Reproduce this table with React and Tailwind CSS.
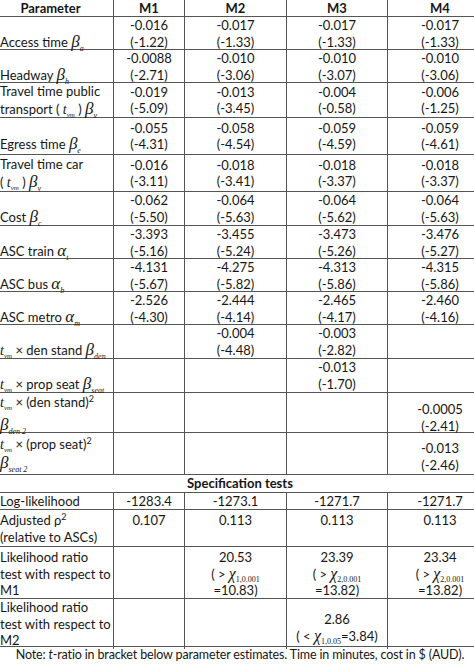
import React from 'react'

const cols = 'grid grid-cols-[126px_71px_102px_101px_104px]'

function Beta({ s }) {
  return (
    <span className="font-['Liberation_Serif'] italic text-[17px] leading-none">
      β<span className="relative top-[4px] text-[8px] leading-none">{s}</span>
    </span>
  )
}

function Alpha({ s }) {
  return (
    <span className="font-['Liberation_Serif'] italic text-[17px] leading-none">
      α<span className="relative top-[4px] text-[8px] leading-none">{s}</span>
    </span>
  )
}

function Tvm() {
  return (
    <span className="font-['Liberation_Serif'] italic text-[14px] leading-none">
      t<span className="relative top-[3px] text-[7px] leading-none">vm</span>
    </span>
  )
}

function Chi({ s }) {
  return (
    <span className="font-['Liberation_Serif'] text-[16px] leading-none">
      <span className="italic">χ</span>
      <span className="relative top-[3px] text-[8px] leading-none">{s}</span>
    </span>
  )
}

function Sq() {
  return <span className="relative top-[-5px] text-[9px] leading-none">2</span>
}

const rows = [
  { h: 'h-[33px]', label: <>Access time <Beta s="a" /></>, v: [['-0.016', '(-1.22)'], ['-0.017', '(-1.33)'], ['-0.017', '(-1.33)'], ['-0.017', '(-1.33)']] },
  { h: 'h-[33px]', label: <>Headway <Beta s="h" /></>, v: [['-0.0088', '(-2.71)'], ['-0.010', '(-3.06)'], ['-0.010', '(-3.07)'], ['-0.010', '(-3.06)']] },
  { h: 'h-[35px]', multi: true, label: <><div>Travel time public</div><div>transport ( <Tvm /> ) <Beta s="v" /></div></>, v: [['-0.019', '(-5.09)'], ['-0.013', '(-3.45)'], ['-0.004', '(-0.58)'], ['-0.006', '(-1.25)']] },
  { h: 'h-[37px]', label: <>Egress time <Beta s="e" /></>, v: [['-0.055', '(-4.31)'], ['-0.058', '(-4.54)'], ['-0.059', '(-4.59)'], ['-0.059', '(-4.61)']] },
  { h: 'h-[37px]', multi: true, label: <><div>Travel time car</div><div>( <Tvm /> ) <Beta s="v" /></div></>, v: [['-0.016', '(-3.11)'], ['-0.018', '(-3.41)'], ['-0.018', '(-3.37)'], ['-0.018', '(-3.37)']] },
  { h: 'h-[34px]', label: <>Cost <Beta s="c" /></>, v: [['-0.062', '(-5.50)'], ['-0.064', '(-5.63)'], ['-0.064', '(-5.62)'], ['-0.064', '(-5.63)']] },
  { h: 'h-[33px]', label: <>ASC train <Alpha s="t" /></>, v: [['-3.393', '(-5.16)'], ['-3.455', '(-5.24)'], ['-3.473', '(-5.26)'], ['-3.476', '(-5.27)']] },
  { h: 'h-[33px]', label: <>ASC bus <Alpha s="b" /></>, v: [['-4.131', '(-5.67)'], ['-4.275', '(-5.82)'], ['-4.313', '(-5.86)'], ['-4.315', '(-5.86)']] },
  { h: 'h-[33px]', label: <>ASC metro <Alpha s="m" /></>, v: [['-2.526', '(-4.30)'], ['-2.444', '(-4.14)'], ['-2.465', '(-4.17)'], ['-2.460', '(-4.16)']] },
  { h: 'h-[34px]', label: <><Tvm /> × den stand <Beta s="den" /></>, v: [null, ['-0.004', '(-4.48)'], ['-0.003', '(-2.82)'], null] },
  { h: 'h-[34px]', label: <><Tvm /> × prop seat <Beta s="seat" /></>, v: [null, null, ['-0.013', '(-1.70)'], null] },
  { h: 'h-[40px]', multi: true, vpad: 'pt-[8px]', label: <><div><Tvm /> × (den stand)<Sq /></div><div className="mt-[5px]"><Beta s="den 2" /></div></>, v: [null, null, null, ['-0.0005', '(-2.41)']] },
  { h: 'h-[42px]', multi: true, vpad: 'pt-[6px]', label: <><div><Tvm /> × (prop seat)<Sq /></div><div className="mt-[1px]"><Beta s="seat 2" /></div></>, v: [null, null, null, ['-0.013', '(-2.46)']] },
]

function Values({ v, vpad }) {
  return (
    <div className={`flex flex-col items-center justify-center border-r border-[#555] ${vpad || ''}`}>
      {v && (
        <>
          <div>{v[0]}</div>
          <div>{v[1]}</div>
        </>
      )}
    </div>
  )
}

export default function App() {
  return (
    <div className="w-[474px] h-[664px] overflow-hidden bg-white text-[#161616] font-['Lato','Noto_Sans',sans-serif] text-[13px] leading-[16.5px]">
      <div className="ml-[-12px] w-[504px]">
        <div className={`${cols} h-[17px] border-b border-[#555] font-bold`}>
          <div className="flex items-center justify-center border-r border-[#555]">Parameter</div>
          <div className="flex items-center justify-center border-r border-[#555]">M1</div>
          <div className="flex items-center justify-center border-r border-[#555]">M2</div>
          <div className="flex items-center justify-center border-r border-[#555]">M3</div>
          <div className="flex items-center justify-center">M4</div>
        </div>

        {rows.map((r, i) => (
          <div key={i} className={`${cols} ${r.h} border-b border-[#555]`}>
            {r.multi ? (
              <div className="flex flex-col justify-center pl-[12px] border-r border-[#555] whitespace-nowrap">{r.label}</div>
            ) : (
              <div className="flex items-center pl-[12px] pt-[16px] border-r border-[#555] whitespace-nowrap">
                <span>{r.label}</span>
              </div>
            )}
            <Values v={r.v[0]} vpad={r.vpad} />
            <Values v={r.v[1]} vpad={r.vpad} />
            <Values v={r.v[2]} vpad={r.vpad} />
            <div className={`flex flex-col items-center justify-center ${r.vpad || ''}`}>
              {r.v[3] && (
                <>
                  <div>{r.v[3][0]}</div>
                  <div>{r.v[3][1]}</div>
                </>
              )}
            </div>
          </div>
        ))}

        <div className="h-[18px] border-b border-[#555] flex items-center justify-center font-bold">
          Specification tests
        </div>

        <div className={`${cols} h-[17px] border-b border-[#555]`}>
          <div className="flex items-center pl-[12px] border-r border-[#555]">Log-likelihood</div>
          <div className="flex items-center justify-center border-r border-[#555]">-1283.4</div>
          <div className="flex items-center justify-center border-r border-[#555]">-1273.1</div>
          <div className="flex items-center justify-center border-r border-[#555]">-1271.7</div>
          <div className="flex items-center justify-center">-1271.7</div>
        </div>

        <div className={`${cols} h-[37px] border-b border-[#555]`}>
          <div className="pl-[12px] pt-[2px] border-r border-[#555]">
            <div>Adjusted ρ<Sq /></div>
            <div>(relative to ASCs)</div>
          </div>
          <div className="pt-[2px] text-center border-r border-[#555]">0.107</div>
          <div className="pt-[2px] text-center border-r border-[#555]">0.113</div>
          <div className="pt-[2px] text-center border-r border-[#555]">0.113</div>
          <div className="pt-[2px] text-center">0.113</div>
        </div>

        <div className={`${cols} h-[52px] border-b border-[#555]`}>
          <div className="pl-[12px] pt-[2px] border-r border-[#555]">
            <div>Likelihood ratio</div>
            <div>test with respect to</div>
            <div>M1</div>
          </div>
          <div className="border-r border-[#555]" />
          <div className="pt-[2px] text-center border-r border-[#555]">
            <div>20.53</div>
            <div>( &gt; <Chi s="1,0.001" /></div>
            <div>=10.83)</div>
          </div>
          <div className="pt-[2px] text-center border-r border-[#555]">
            <div>23.39</div>
            <div>( &gt; <Chi s="2,0.001" /></div>
            <div>=13.82)</div>
          </div>
          <div className="pt-[2px] text-center">
            <div>23.34</div>
            <div>( &gt; <Chi s="2,0.001" /></div>
            <div>=13.82)</div>
          </div>
        </div>

        <div className={`${cols} h-[48px] border-b border-[#555]`}>
          <div className="pl-[12px] border-r border-[#555]">
            <div>Likelihood ratio</div>
            <div>test with respect to</div>
            <div>M2</div>
          </div>
          <div className="border-r border-[#555]" />
          <div className="border-r border-[#555]" />
          <div className="pt-[12px] text-center border-r border-[#555]">
            <div>2.86</div>
            <div>( &lt; <Chi s="1,0.05" />=3.84)</div>
          </div>
          <div />
        </div>

        <div className="h-[17px] flex items-center justify-center whitespace-nowrap text-[12.5px] tracking-[-0.15px]">
          Note: <span className="italic ml-[3px]">t</span>-ratio in bracket below parameter estimates. Time in minutes, cost in $ (AUD).
        </div>
      </div>
    </div>
  )
}
